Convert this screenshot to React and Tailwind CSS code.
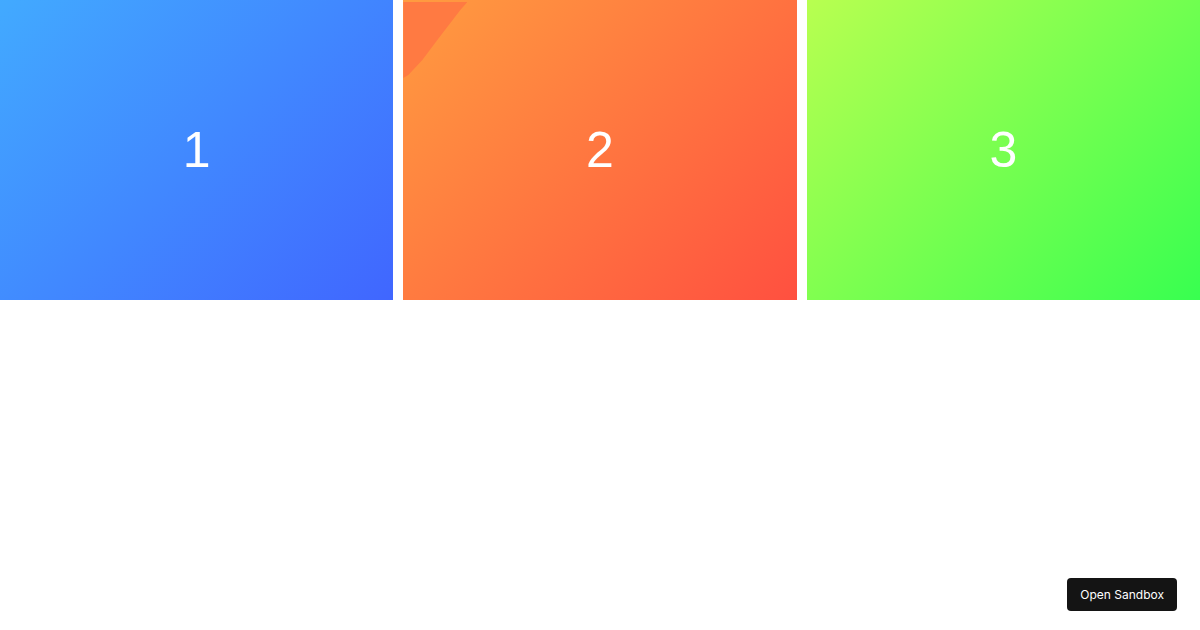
import React from 'react'

const slides = [
  { n: 1, bg: 'bg-[linear-gradient(135deg,#42aaff,#4066ff)]' },
  { n: 2, bg: 'bg-[linear-gradient(135deg,#ff9c40,#ff5040)]' },
  { n: 3, bg: 'bg-[linear-gradient(135deg,#b8ff50,#38ff50)]' },
]

const App = () => {
  return (
    <div className="relative w-[1200px] h-[630px] bg-white overflow-hidden font-['Liberation_Sans',Arial,sans-serif]">
      <div className="flex gap-[10px] h-[300px]">
        {slides.map((s) => (
          <div key={s.n} className={`relative flex-1 flex items-center justify-center text-white text-[50px] leading-none ${s.bg}`}>
            {s.n === 2 && (
              <div className="absolute left-0 top-[2px] w-[64px] h-[76px] bg-[#ff7a42] [clip-path:polygon(0_0,64px_0,57px_8px,34px_38px,19px_58px,5px_73px,0_76px)]" />
            )}
            <span className="relative">{s.n}</span>
          </div>
        ))}
      </div>

      <button className="absolute right-[23px] bottom-[19px] h-[33px] px-[13px] rounded-[4px] bg-[#141414] text-white text-[12px] font-['Inter',sans-serif]">
        Open Sandbox
      </button>
    </div>
  )
}

export default App
